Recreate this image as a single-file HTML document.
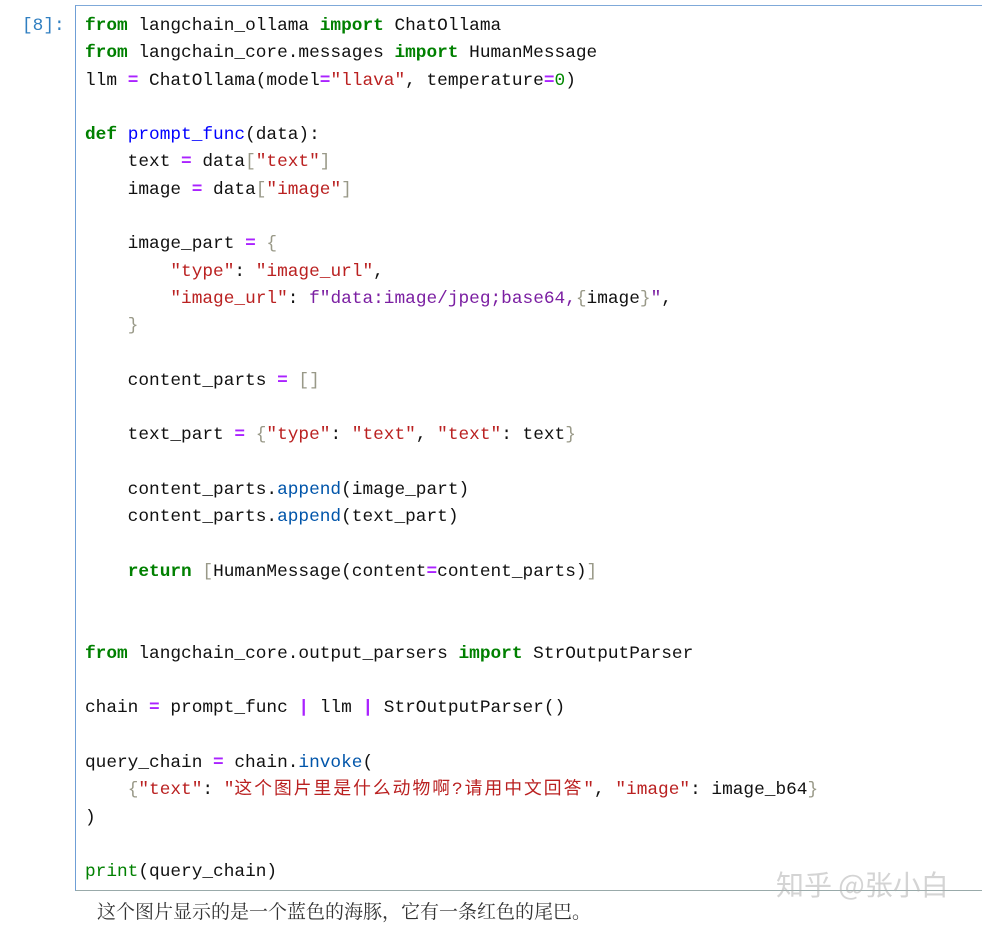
<!DOCTYPE html>
<html><head><meta charset="utf-8"><style>
html,body{margin:0;padding:0;background:#fff;width:982px;height:928px;overflow:hidden;position:relative}
.prompt{position:absolute;left:22px;top:13px;font:17.8px/27.3px "Liberation Mono",monospace;color:#307fc1}
.box{position:absolute;left:75px;top:5px;width:920px;height:884px;border:1px solid #7fa9d9;border-left:1.5px solid #6f9fd6;border-bottom-color:#9aa;background:#fff}
pre{position:absolute;left:85px;top:13px;margin:0;font:17.8px/27.3px "Liberation Mono","Noto Sans CJK SC",monospace;color:#111;white-space:pre}
.k{color:#008000;font-weight:bold}.s{color:#ba2121}.o{color:#aa22ff;font-weight:bold}.b{color:#998}.f{color:#0000ff}.m{color:#0055aa}.n{color:#008800}.fs{color:#7b1fa2}.bi{color:#008000}
.cj{letter-spacing:2px}
.out{position:absolute;left:97px;top:900px;font:19px/22px "Noto Serif CJK SC","Liberation Serif",serif;color:#333}
.wm{position:absolute;left:776px;top:866px;font:28px/36px "Noto Sans CJK SC",sans-serif;color:rgba(170,170,170,.5)}
</style></head><body>
<div class="prompt">[8]:</div>
<div class="box"></div>
<pre><span class="k">from</span> langchain_ollama <span class="k">import</span> ChatOllama
<span class="k">from</span> langchain_core.messages <span class="k">import</span> HumanMessage
llm <span class="o">=</span> ChatOllama(model<span class="o">=</span><span class="s">"llava"</span>, temperature<span class="o">=</span><span class="n">0</span>)

<span class="k">def</span> <span class="f">prompt_func</span>(data):
    text <span class="o">=</span> data<span class="b">[</span><span class="s">"text"</span><span class="b">]</span>
    image <span class="o">=</span> data<span class="b">[</span><span class="s">"image"</span><span class="b">]</span>

    image_part <span class="o">=</span> <span class="b">{</span>
        <span class="s">"type"</span>: <span class="s">"image_url"</span>,
        <span class="s">"image_url"</span>: <span class="fs">f"data:image/jpeg;base64,</span><span class="b">{</span>image<span class="b">}</span><span class="fs">"</span>,
    <span class="b">}</span>

    content_parts <span class="o">=</span> <span class="b">[]</span>

    text_part <span class="o">=</span> <span class="b">{</span><span class="s">"type"</span>: <span class="s">"text"</span>, <span class="s">"text"</span>: text<span class="b">}</span>

    content_parts.<span class="m">append</span>(image_part)
    content_parts.<span class="m">append</span>(text_part)

    <span class="k">return</span> <span class="b">[</span>HumanMessage(content<span class="o">=</span>content_parts)<span class="b">]</span>


<span class="k">from</span> langchain_core.output_parsers <span class="k">import</span> StrOutputParser

chain <span class="o">=</span> prompt_func <span class="o">|</span> llm <span class="o">|</span> StrOutputParser()

query_chain <span class="o">=</span> chain.<span class="m">invoke</span>(
    <span class="b">{</span><span class="s">"text"</span>: <span class="s">"<span class="cj">这个图片里是什么动物啊?请用中文回答</span>"</span>, <span class="s">"image"</span>: image_b64<span class="b">}</span>
)

<span class="bi">print</span>(query_chain)</pre>
<div class="wm">知乎 @张小白</div>
<div class="out">这个图片显示的是一个蓝色的海豚，它有一条红色的尾巴。</div>
</body></html>
